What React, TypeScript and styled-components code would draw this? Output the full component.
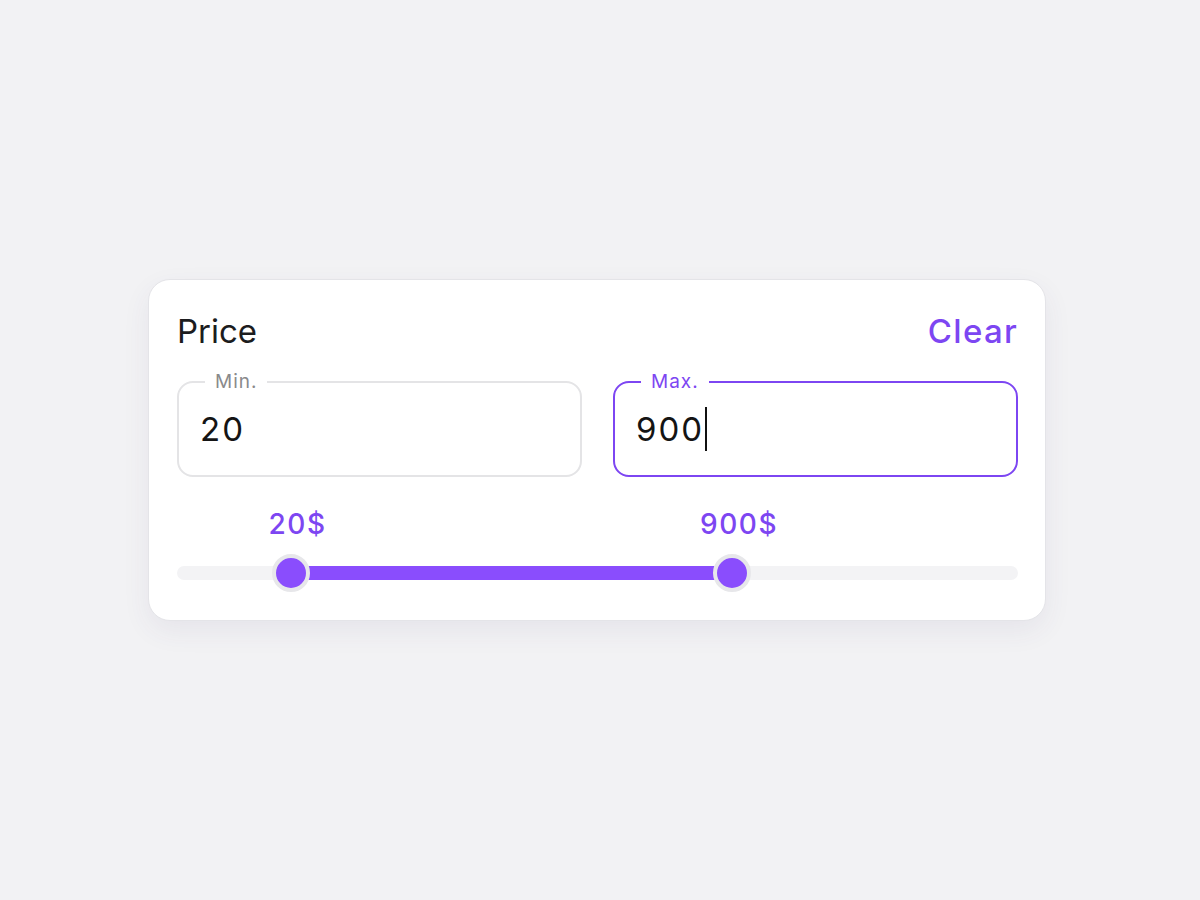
import React from "react";
import styled, { createGlobalStyle } from "styled-components";

const Global = createGlobalStyle`
  html, body { margin: 0; padding: 0; background: #f2f2f4; }
  body { font-family: Inter, "Noto Sans", sans-serif; -webkit-font-smoothing: antialiased; }
`;

const PURPLE = "#7d46f2";
const FILL = "#8a4dfd";

const Page = styled.div`
  min-height: 900px;
  box-sizing: border-box;
  padding: 279px 0 0 148px;
`;

const Card = styled.div`
  width: 898px;
  box-sizing: border-box;
  background: #ffffff;
  border: 1px solid #e4e4e8;
  border-radius: 22px;
  box-shadow: 0 10px 28px rgba(70, 60, 110, 0.07);
  padding: 31px 27px 40px 28px;
`;

const Header = styled.div`
  display: flex;
  justify-content: space-between;
  align-items: center;
  height: 40px;
`;

const Title = styled.div`
  font-size: 33px;
  line-height: 40px;
  font-weight: 400;
  color: #1c1c1e;
`;

const ClearButton = styled.button`
  border: none;
  background: none;
  padding: 0;
  font-family: inherit;
  font-size: 33px;
  line-height: 40px;
  font-weight: 500;
  letter-spacing: 1.3px;
  color: ${PURPLE};
  cursor: pointer;
`;

const Inputs = styled.div`
  display: grid;
  grid-template-columns: 1fr 1fr;
  column-gap: 31px;
  margin-top: 30px;
`;

const Field = styled.div<{ $active?: boolean }>`
  position: relative;
  height: 96px;
  box-sizing: border-box;
  border: 2px solid ${(p) => (p.$active ? PURPLE : "#e4e4e6")};
  border-radius: 16px;
  display: flex;
  align-items: center;
  padding-left: 21px;
`;

const FieldLabel = styled.span<{ $active?: boolean }>`
  position: absolute;
  left: 26px;
  top: -13px;
  padding: 0 10px;
  background: #ffffff;
  font-size: 19px;
  line-height: 24px;
  letter-spacing: 1px;
  color: ${(p) => (p.$active ? PURPLE : "#8a8a8c")};
`;

const Value = styled.span`
  font-size: 33px;
  line-height: 40px;
  letter-spacing: 2px;
  color: #141414;
  display: flex;
  align-items: center;
`;

const Caret = styled.span`
  display: inline-block;
  width: 2px;
  height: 44px;
  background: #111;
  margin-left: 1px;
`;

const Slider = styled.div`
  position: relative;
  margin-top: 31px;
  padding-top: 58px;
`;

const ValueTag = styled.span`
  position: absolute;
  top: 0;
  transform: translateX(-50%);
  margin-left: 7px;
  font-size: 28px;
  line-height: 32px;
  font-weight: 500;
  letter-spacing: 1.5px;
  color: ${PURPLE};
  white-space: nowrap;
`;

const Track = styled.div`
  position: relative;
  height: 14px;
  border-radius: 7px;
  background: #f3f3f5;
`;

const Range = styled.div`
  position: absolute;
  top: 0;
  bottom: 0;
  background: ${FILL};
`;

const Thumb = styled.div`
  position: absolute;
  top: 50%;
  width: 38px;
  height: 38px;
  box-sizing: border-box;
  border-radius: 50%;
  background: ${FILL};
  border: 4.5px solid #e7e7ea;
  transform: translate(-50%, -50%);
`;

const low = { value: 20, pct: 13.5 };
const high = { value: 900, pct: 66 };

export default function App() {
  return (
    <Page>
      <Global />
      <Card>
        <Header>
          <Title>Price</Title>
          <ClearButton>Clear</ClearButton>
        </Header>
        <Inputs>
          <Field>
            <FieldLabel>Min.</FieldLabel>
            <Value>{low.value}</Value>
          </Field>
          <Field $active>
            <FieldLabel $active>Max.</FieldLabel>
            <Value>
              {high.value}
              <Caret />
            </Value>
          </Field>
        </Inputs>
        <Slider>
          <ValueTag style={{ left: `${low.pct}%` }}>{low.value}$</ValueTag>
          <ValueTag style={{ left: `${high.pct}%` }}>{high.value}$</ValueTag>
          <Track>
            <Range style={{ left: `${low.pct}%`, width: `${high.pct - low.pct}%` }} />
            <Thumb style={{ left: `${low.pct}%` }} />
            <Thumb style={{ left: `${high.pct}%` }} />
          </Track>
        </Slider>
      </Card>
    </Page>
  );
}
